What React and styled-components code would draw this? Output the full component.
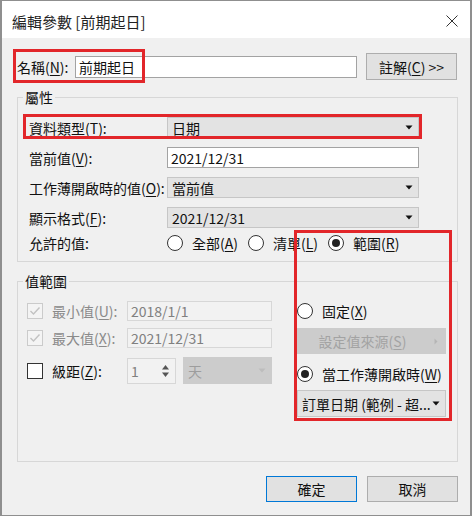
import React from 'react';
import styled, { createGlobalStyle } from 'styled-components';

const Global = createGlobalStyle`
  html, body { margin: 0; padding: 0; background: #fff; }
  body {
    font-family: "Noto Sans CJK TC", "Noto Sans", sans-serif;
    font-size: 14px;
    color: #111;
  }
  * { box-sizing: border-box; }
`;

const Window = styled.div`
  position: relative;
  width: 472px;
  height: 516px;
  border: 1px solid #8f8f8f;
  border-left-width: 2px;
  border-right-width: 2px;
  background: #f0f0f0;
  display: flex;
  flex-direction: column;
`;

const TitleBar = styled.div`
  height: 37px;
  flex: none;
  background: #fff;
  display: flex;
  align-items: center;
  justify-content: space-between;
  padding: 3px 12px 0 10px;
  font-size: 15px;
  color: #222;
`;

const CloseBtn = styled.span`
  display: flex;
  width: 12px;
  height: 12px;
`;

const Body = styled.div`
  flex: 1;
  display: flex;
  flex-direction: column;
  padding: 15px 12px 13px 15px;
`;

const NameRow = styled.div`
  display: flex;
  align-items: center;
  height: 27px;
`;

const Label = styled.span`
  width: ${p => p.$w}px;
  flex: none;
  white-space: nowrap;
  line-height: 16px;
  color: ${p => (p.$disabled ? '#8a8a8a' : '#111')};
`;

const U = styled.span`
  text-decoration: underline;
  text-underline-offset: 2px;
  text-decoration-thickness: 1px;
`;

const TextBox = styled.div`
  flex: none;
  width: ${p => p.$w}px;
  height: ${p => p.$h || 20}px;
  margin-right: ${p => p.$mr || 0}px;
  border: 1px solid ${p => (p.$disabled ? '#d7d7d7' : '#a3a3a3')};
  background: ${p => (p.$disabled ? '#f2f2f2' : '#fff')};
  color: ${p => (p.$disabled ? '#808080' : '#111')};
  display: flex;
  align-items: center;
  justify-content: space-between;
  padding: 0 5px 0 3px;
  line-height: 16px;
  white-space: nowrap;
`;

const Combo = styled.div`
  flex: none;
  width: ${p => p.$w}px;
  height: ${p => p.$h || 21}px;
  display: flex;
  align-items: center;
  justify-content: space-between;
  padding: 0 5px 0 4px;
  background: ${p => (p.$disabled ? '#cccccc' : '#e3e3e3')};
  border: 1px solid ${p => (p.$disabled ? '#cccccc' : '#c6c6c6')};
  color: ${p => (p.$disabled ? '#9d9d9d' : '#111')};
  line-height: 16px;
  white-space: nowrap;
  overflow: hidden;
`;

const Button = styled.button`
  flex: none;
  width: ${p => p.$w || 91}px;
  height: ${p => p.$h || 26}px;
  font: inherit;
  line-height: 16px;
  background: #e1e1e1;
  border: 1px solid ${p => (p.$primary ? '#0078d7' : '#adadad')};
  color: #111;
  padding: 0;
  cursor: default;
`;

const Group = styled.fieldset`
  margin: ${p => p.$mt}px 0 0 0;
  padding: 0;
  min-width: 0;
  border: 1px solid #d7d7d7;
`;

const Legend = styled.legend`
  margin-left: 5px;
  padding: 0 2px;
  font-size: 14px;
  line-height: 14px;
  color: #111;
`;

const GroupInner = styled.div`
  display: flex;
  flex-direction: ${p => p.$dir || 'column'};
  gap: ${p => p.$gap || 0}px;
  padding: ${p => p.$pad};
`;

const PropRows = styled.div`
  display: flex;
  flex-direction: column;
  gap: 9px;
`;

const Row = styled.div`
  display: flex;
  align-items: center;
  height: ${p => p.$h || 21}px;
  margin-top: ${p => p.$mt || 0}px;
`;

const RadioGroup = styled.div`
  display: flex;
  align-items: center;
  gap: 10px;
`;

const RadioOpt = styled.label`
  display: flex;
  align-items: center;
  gap: 9px;
  margin-right: ${p => p.$mr || 0}px;
  line-height: 16px;
  white-space: nowrap;
`;

const RadioCircle = styled.span`
  flex: none;
  width: 16px;
  height: 16px;
  border-radius: 50%;
  border: 1px solid #333;
  background: #fff;
  display: flex;
  align-items: center;
  justify-content: center;
  &::after {
    content: '';
    width: 8px;
    height: 8px;
    border-radius: 50%;
    background: ${p => (p.$checked ? '#222' : 'transparent')};
  }
`;

const CheckBox = styled.span`
  flex: none;
  width: 16px;
  height: 16px;
  margin-right: 9px;
  border: 1px solid ${p => (p.$disabled ? '#cbcbcb' : '#333')};
  background: ${p => (p.$disabled ? '#f4f4f4' : '#fff')};
  display: flex;
  align-items: center;
  justify-content: center;
`;

const Column = styled.div`
  display: flex;
  flex-direction: column;
  width: ${p => p.$w}px;
  flex: none;
`;

const SourceButton = styled.div`
  height: 26px;
  margin-top: 7px;
  background: #cccccc;
  color: #a3a3a3;
  display: flex;
  align-items: center;
  position: relative;
  padding: 0 8px 0 0;
  line-height: 16px;
`;

const SourceText = styled.span`
  flex: 1;
  text-align: center;
  padding-right: 6px;
`;

const Footer = styled.div`
  display: flex;
  justify-content: flex-end;
  gap: 10px;
  margin-top: 14px;
`;

const Highlight = styled.div`
  position: absolute;
  left: ${p => p.$x - 2}px;
  top: ${p => p.$y - 1}px;
  width: ${p => p.$w}px;
  height: ${p => p.$h}px;
  border: 3px solid #e2262a;
  pointer-events: none;
`;

const Arrow = ({ color = '#111' }) => (
  <svg width="8" height="5" viewBox="0 0 8 5">
    <path d="M0.5 0.5 H7.5 L4 4.5 Z" fill={color} />
  </svg>
);

const RightArrow = () => (
  <svg width="4" height="7" viewBox="0 0 4 7">
    <path d="M0.5 0.5 L3.5 3.5 L0.5 6.5 Z" fill="#b5b5b5" />
  </svg>
);

const Tick = () => (
  <svg width="12" height="10" viewBox="0 0 12 10">
    <path d="M1.5 5 L4.5 8 L10.5 1.5" fill="none" stroke="#c2c2c2" strokeWidth="1.4" />
  </svg>
);

const SpinArrows = () => (
  <svg width="9" height="14" viewBox="0 0 9 14">
    <path d="M4.5 1 L8 5.5 H1 Z" fill="#555" />
    <path d="M4.5 13 L8 8.5 H1 Z" fill="#555" />
  </svg>
);

const Acc = ({ t, k, colon = true }) => (
  <>
    {t}(<U>{k}</U>){colon ? ':' : ''}
  </>
);

export default function App() {
  return (
    <>
      <Global />
      <Window>
        <TitleBar>
          <span>編輯參數 [前期起日]</span>
          <CloseBtn>
            <svg width="12" height="12" viewBox="0 0 12 12">
              <path d="M0.5 0.5 L11.5 11.5 M11.5 0.5 L0.5 11.5" stroke="#333" strokeWidth="1" />
            </svg>
          </CloseBtn>
        </TitleBar>
        <Body>
          <NameRow>
            <Label $w={58}>
              <Acc t="名稱" k="N" />
            </Label>
            <TextBox $w={282} $h={22} $mr={9}>前期起日</TextBox>
            <Button $h={27}>
              <Acc t="註解" k="C" colon={false} /> &gt;&gt;
            </Button>
          </NameRow>

          <Group $mt={10}>
            <Legend>屬性</Legend>
            <GroupInner $pad="13px 38px 10px 11px">
              <PropRows>
                <Row>
                  <Label $w={138}>
                    <Acc t="資料類型" k="T" />
                  </Label>
                  <Combo $w={252}>
                    <span>日期</span>
                    <Arrow />
                  </Combo>
                </Row>
                <Row>
                  <Label $w={138}>
                    <Acc t="當前值" k="V" />
                  </Label>
                  <TextBox $w={252} $h={21}>2021/12/31</TextBox>
                </Row>
                <Row>
                  <Label $w={138}>
                    <Acc t="工作薄開啟時的值" k="O" />
                  </Label>
                  <Combo $w={252}>
                    <span>當前值</span>
                    <Arrow />
                  </Combo>
                </Row>
                <Row>
                  <Label $w={138}>
                    <Acc t="顯示格式" k="F" />
                  </Label>
                  <Combo $w={252}>
                    <span>2021/12/31</span>
                    <Arrow />
                  </Combo>
                </Row>
              </PropRows>
              <Row $h={16} $mt={7}>
                <Label $w={138}>允許的值:</Label>
                <RadioGroup>
                  <RadioOpt $mr={0}>
                    <RadioCircle />
                    <span>
                      <Acc t="全部" k="A" colon={false} />
                    </span>
                  </RadioOpt>
                  <RadioOpt>
                    <RadioCircle />
                    <span>
                      <Acc t="清單" k="L" colon={false} />
                    </span>
                  </RadioOpt>
                  <RadioOpt>
                    <RadioCircle $checked />
                    <span>
                      <Acc t="範圍" k="R" colon={false} />
                    </span>
                  </RadioOpt>
                </RadioGroup>
              </Row>
            </GroupInner>
          </Group>

          <Group $mt={12}>
            <Legend>值範圍</Legend>
            <GroupInner $dir="row" $gap={25} $pad="13px 11px 44px 9px">
              <Column $w={245}>
                <Row $h={20}>
                  <CheckBox $disabled>
                    <Tick />
                  </CheckBox>
                  <Label $w={75} $disabled>
                    <Acc t="最小值" k="U" />
                  </Label>
                  <TextBox $w={145} $disabled>2018/1/1</TextBox>
                </Row>
                <Row $h={20} $mt={7}>
                  <CheckBox $disabled>
                    <Tick />
                  </CheckBox>
                  <Label $w={75} $disabled>
                    <Acc t="最大值" k="X" />
                  </Label>
                  <TextBox $w={145} $disabled>2021/12/31</TextBox>
                </Row>
                <Row $h={27} $mt={9}>
                  <CheckBox />
                  <Label $w={75}>
                    <Acc t="級距" k="Z" />
                  </Label>
                  <TextBox $w={49} $h={26} $mr={7} $disabled>
                    <span>1</span>
                    <SpinArrows />
                  </TextBox>
                  <Combo $w={89} $h={27} $disabled>
                    <span>天</span>
                    <Arrow color="#bdbdbd" />
                  </Combo>
                </Row>
              </Column>
              <Column $w={149}>
                <Row $h={20}>
                  <RadioOpt>
                    <RadioCircle />
                    <span>
                      <Acc t="固定" k="X" colon={false} />
                    </span>
                  </RadioOpt>
                </Row>
                <SourceButton>
                  <SourceText>
                    <Acc t="設定值來源" k="S" colon={false} />
                  </SourceText>
                  <RightArrow />
                </SourceButton>
                <Row $h={20} $mt={10}>
                  <RadioOpt>
                    <RadioCircle $checked />
                    <span>
                      <Acc t="當工作薄開啟時" k="W" colon={false} />
                    </span>
                  </RadioOpt>
                </Row>
                <Row $h={27} $mt={6}>
                  <Combo $w={149} $h={27}>
                    <span>訂單日期 (範例 - 超...</span>
                    <Arrow />
                  </Combo>
                </Row>
              </Column>
            </GroupInner>
          </Group>

          <Footer>
            <Button $primary>確定</Button>
            <Button>取消</Button>
          </Footer>
        </Body>

        <Highlight $x={13} $y={49} $w={132} $h={34} />
        <Highlight $x={23} $y={114} $w={399} $h={25} />
        <Highlight $x={294} $y={230} $w={158} $h={191} />
      </Window>
    </>
  );
}
